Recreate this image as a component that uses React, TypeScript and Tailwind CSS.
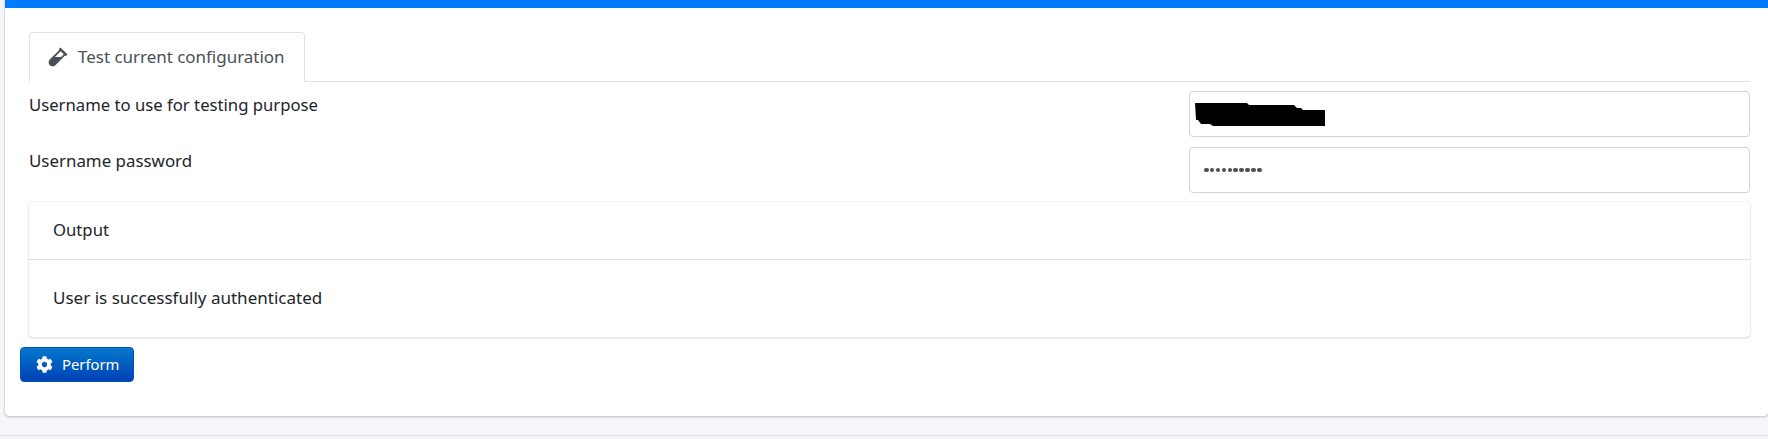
import React from 'react';
import { FaVial, FaCog } from 'react-icons/fa';

const App: React.FC = () => {
  return (
    <div className="h-[439px] w-[1768px] overflow-hidden bg-[#f4f6f9] font-['Noto_Sans','Open_Sans',sans-serif] text-[#212529]">
      <div className="flex h-[436px] flex-col border-b border-[#dee2e6]">
        <div className="ml-[5px] h-[416px] rounded-b-[4px] border-t-[8px] border-[#007bff] bg-white pt-[24px] pl-[15px] pr-[18px] shadow-[0_0_1px_rgba(0,0,0,.3),0_1px_3px_rgba(0,0,0,.2)]">
          {/* Tabs */}
          <div className="ml-[9px] flex h-[50px] border-b border-[#dee2e6]">
            <div className="flex h-[50px] w-[276px] items-center gap-[10px] rounded-t-[4px] border border-b-0 border-[#dee2e6] bg-white pb-[1px] pl-[18px] text-[#495057]">
              <FaVial size={20} className="text-[#495057]" />
              <span className="text-[16.95px]">Test current configuration</span>
            </div>
          </div>

          {/* Form */}
          <div className="mt-[9px] ml-[9px] flex h-[46px] justify-between">
            <label className="pt-[2px] text-[16.7px] leading-[24px]">Username to use for testing purpose</label>
            <div className="relative h-[46px] w-[561px] rounded-[4px] border border-[#ced4da] bg-white">
              <svg className="absolute left-[5px] top-[10px]" width="130" height="24" viewBox="0 0 130 24">
                <path d="M0 1h52l2 2h45l3 3h4l2 2h22v16H18l-3-2H6l-3-4H1z" fill="#000" />
              </svg>
            </div>
          </div>
          <div className="mt-[10px] ml-[9px] flex h-[46px] justify-between">
            <label className="pt-[2px] text-[16.9px] leading-[24px]">Username password</label>
            <div className="flex h-[46px] w-[561px] items-center rounded-[4px] border border-[#ced4da] bg-white pl-[14px] text-[#495057]">
              <div className="flex gap-[1.4px]">
                {Array.from({ length: 10 }).map((_, i) => (
                  <span key={i} className="h-[4.5px] w-[4.5px] rounded-full bg-[#495057]" />
                ))}
              </div>
            </div>
          </div>

          {/* Output */}
          <div className="mt-[9px] ml-[9px] h-[135px] rounded-[4px] bg-white shadow-[0_0_1px_rgba(0,0,0,.2),0_1px_3px_rgba(0,0,0,.15)]">
            <div className="flex h-[58px] items-center border-b border-[#dfdfdf] pb-[1px] pl-[24px] text-[16.7px]">Output</div>
            <div className="flex h-[77px] items-center pb-[1px] pl-[24px] text-[17.05px]">User is successfully authenticated</div>
          </div>

          {/* Perform */}
          <button className="mt-[10px] flex h-[35px] w-[114px] items-center gap-[9px] rounded-[4px] border border-[#0350b8] bg-gradient-to-b from-[#0a78cc] to-[#0040b5] pl-[15px] text-[14.8px] text-white">
            <FaCog size={17} />
            <span>Perform</span>
          </button>
        </div>
      </div>
    </div>
  );
};

export default App;
